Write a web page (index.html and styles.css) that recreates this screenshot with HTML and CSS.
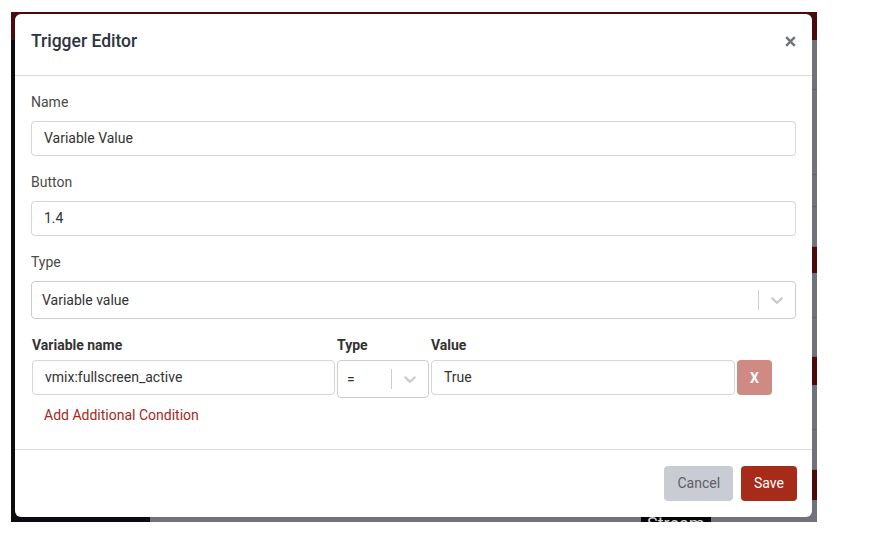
FILE: index.html
```html
<!DOCTYPE html>
<html lang="en">
<head>
<meta charset="utf-8">
<title>Trigger Editor</title>
<link rel="stylesheet" href="styles.css">
</head>
<body>
<div class="stage">
  <div class="app-top"></div>
  <div class="app-main">
    <div class="app-side"></div>
    <div class="app-content">
      <div class="row h50"></div>
      <div class="row h85"></div>
      <div class="row h32"></div>
      <div class="row h40"></div>
      <div class="band h26"></div>
      <div class="row h45"></div>
      <div class="row h39"></div>
      <div class="band h28"></div>
      <div class="row h45"></div>
      <div class="row h40"></div>
      <div class="band h30"></div>
      <div class="row-last"><div class="stream">Stream</div></div>
    </div>
  </div>

  <div class="modal">
    <div class="modal-header">
      <h5 class="modal-title">Trigger Editor</h5>
      <button class="close" aria-label="Close">
        <svg width="11" height="11" viewBox="0 0 11 11"><path d="M1.2 1.2L9.8 9.8M9.8 1.2L1.2 9.8" stroke="#6f737a" stroke-width="2.4" stroke-linecap="butt"/></svg>
      </button>
    </div>
    <div class="modal-body">
      <div class="group">
        <label class="lbl">Name</label>
        <div class="input">Variable Value</div>
      </div>
      <div class="group">
        <label class="lbl">Button</label>
        <div class="input">1.4</div>
      </div>
      <div class="group group-select">
        <label class="lbl">Type</label>
        <div class="select">
          <div class="select-value">Variable value</div>
          <span class="sep"></span>
          <span class="chev"><svg width="20" height="20" viewBox="0 0 20 20"><path fill="#cccccc" d="M4.516 7.548c0.436-0.446 1.043-0.481 1.576 0l3.908 3.747 3.908-3.747c0.533-0.481 1.141-0.446 1.574 0 0.436 0.445 0.408 1.197 0 1.615-0.406 0.418-4.695 4.502-4.695 4.502-0.217 0.223-0.502 0.335-0.787 0.335s-0.57-0.112-0.789-0.335c0 0-4.287-4.084-4.695-4.502s-0.436-1.17 0-1.615z"/></svg></span>
        </div>
      </div>
      <div class="cond">
        <div class="cond-lbl">Variable name</div>
        <div class="cond-lbl">Type</div>
        <div class="cond-lbl">Value</div>
        <div></div>
        <div class="input">vmix:fullscreen_active</div>
        <div class="select">
          <div class="select-value">=</div>
          <span class="sep"></span>
          <span class="chev"><svg width="20" height="20" viewBox="0 0 20 20"><path fill="#cccccc" d="M4.516 7.548c0.436-0.446 1.043-0.481 1.576 0l3.908 3.747 3.908-3.747c0.533-0.481 1.141-0.446 1.574 0 0.436 0.445 0.408 1.197 0 1.615-0.406 0.418-4.695 4.502-4.695 4.502-0.217 0.223-0.502 0.335-0.787 0.335s-0.57-0.112-0.789-0.335c0 0-4.287-4.084-4.695-4.502s-0.436-1.17 0-1.615z"/></svg></span>
        </div>
        <div class="input">True</div>
        <button class="btn-x">X</button>
      </div>
      <button class="btn-link">Add Additional Condition</button>
    </div>
    <div class="modal-footer">
      <button class="btn btn-cancel">Cancel</button>
      <button class="btn btn-save">Save</button>
    </div>
  </div>
</div>
</body>
</html>
```

FILE: styles.css
```css
* { box-sizing: border-box; }

html, body {
  margin: 0;
  padding: 0;
  background: #ffffff;
  font-family: Roboto, "Liberation Sans", Arial, sans-serif;
}

.stage {
  position: relative;
  margin: 12px 0 0 11px;
  width: 806px;
  height: 510px;
  background: #72727c;
  display: flex;
  flex-direction: column;
  overflow: hidden;
}

.app-top {
  height: 28px;
  background: #4b0b0b;
  flex: none;
}

.app-main {
  flex: 1;
  display: flex;
}

.app-side {
  width: 139px;
  background: #0b0b11;
}

.app-content {
  flex: 1;
  display: flex;
  flex-direction: column;
}

.row { border-bottom: 1px solid #63636c; }
.band { background: #4b0b0b; }
.h50 { height: 50px; }
.h85 { height: 85px; }
.h32 { height: 32px; }
.h40 { height: 40px; }
.h26 { height: 26px; }
.h45 { height: 45px; }
.h39 { height: 39px; }
.h28 { height: 28px; }
.h30 { height: 30px; }

.row-last {
  flex: 1;
  display: flex;
  align-items: flex-end;
  padding-left: 491px;
}

.stream {
  width: 70px;
  height: 9px;
  background: #050505;
  color: #cfcfd4;
  font-size: 18px;
  line-height: 22px;
  padding-left: 6px;
  overflow: hidden;
}

/* Modal */
.modal {
  position: absolute;
  left: 4px;
  top: 2px;
  width: 797px;
  background: #ffffff;
  border-radius: 6px;
  display: flex;
  flex-direction: column;
}

.modal-header {
  height: 62px;
  padding: 0 16px 6px 16px;
  border-bottom: 1px solid #dcdcdc;
  display: flex;
  align-items: center;
  justify-content: space-between;
}

.modal-title {
  margin: 0;
  font-size: 17.5px;
  font-weight: 500;
  line-height: 27px;
  color: #2d3340;
}

.close {
  border: 0;
  background: none;
  padding: 0;
  margin: 0;
  width: 11px;
  height: 11px;
  display: flex;
  cursor: pointer;
}

.modal-body {
  padding: 16px 16px 16px 16px;
  display: flex;
  flex-direction: column;
}

.group {
  display: flex;
  flex-direction: column;
  margin-bottom: 16px;
}

.lbl {
  font-size: 14px;
  line-height: 21px;
  color: #4a4a4a;
  margin-bottom: 8px;
}

.input {
  height: 35px;
  border: 1px solid #d3d6da;
  border-radius: 4px;
  padding: 0 12px;
  font-size: 14px;
  line-height: 33px;
  color: #333333;
  white-space: nowrap;
  overflow: hidden;
}

.select {
  height: 38px;
  border: 1px solid #cccccc;
  border-radius: 4px;
  display: flex;
  align-items: center;
}

.select-value {
  flex: 1;
  padding: 0 8px 0 10px;
  font-size: 14px;
  color: #333333;
  white-space: nowrap;
}

.sep {
  width: 1px;
  height: 20px;
  background: #cccccc;
  flex: none;
}

.chev {
  width: 36px;
  display: flex;
  justify-content: center;
  align-items: center;
  flex: none;
}

.cond {
  margin-left: 1px;
  display: grid;
  grid-template-columns: 303px 92px 304px 35px;
  column-gap: 2px;
  align-items: start;
}

.cond-lbl {
  font-size: 14px;
  font-weight: 700;
  line-height: 21px;
  color: #333333;
  margin-bottom: 4px;
}

.cond .select-value {
  padding-left: 9px;
}

.btn-x {
  height: 35px;
  border: 0;
  border-radius: 4px;
  background: #cf8b83;
  color: #ffffff;
  font-family: Roboto, "Liberation Sans", Arial, sans-serif;
  font-size: 14px;
  font-weight: 700;
  padding: 0;
}

.btn-link {
  align-self: flex-start;
  margin-left: 1px;
  border: 1px solid transparent;
  background: none;
  padding: 6px 12px 6px 11px;
  font-family: Roboto, "Liberation Sans", Arial, sans-serif;
  font-size: 14px;
  line-height: 21px;
  color: #a3291c;
  cursor: pointer;
}

.modal-footer {
  border-top: 1px solid #dcdcdc;
  padding: 16px 15px 16px 16px;
  display: flex;
  justify-content: flex-end;
  gap: 8px;
}

.btn {
  height: 35px;
  border: 0;
  border-radius: 4px;
  padding: 0 13px;
  font-family: Roboto, "Liberation Sans", Arial, sans-serif;
  font-size: 14px;
  line-height: 35px;
  cursor: pointer;
}

.btn-cancel {
  background: #c9ccd2;
  color: #59606b;
}

.btn-save {
  background: #a62b18;
  color: #ffffff;
}
```
